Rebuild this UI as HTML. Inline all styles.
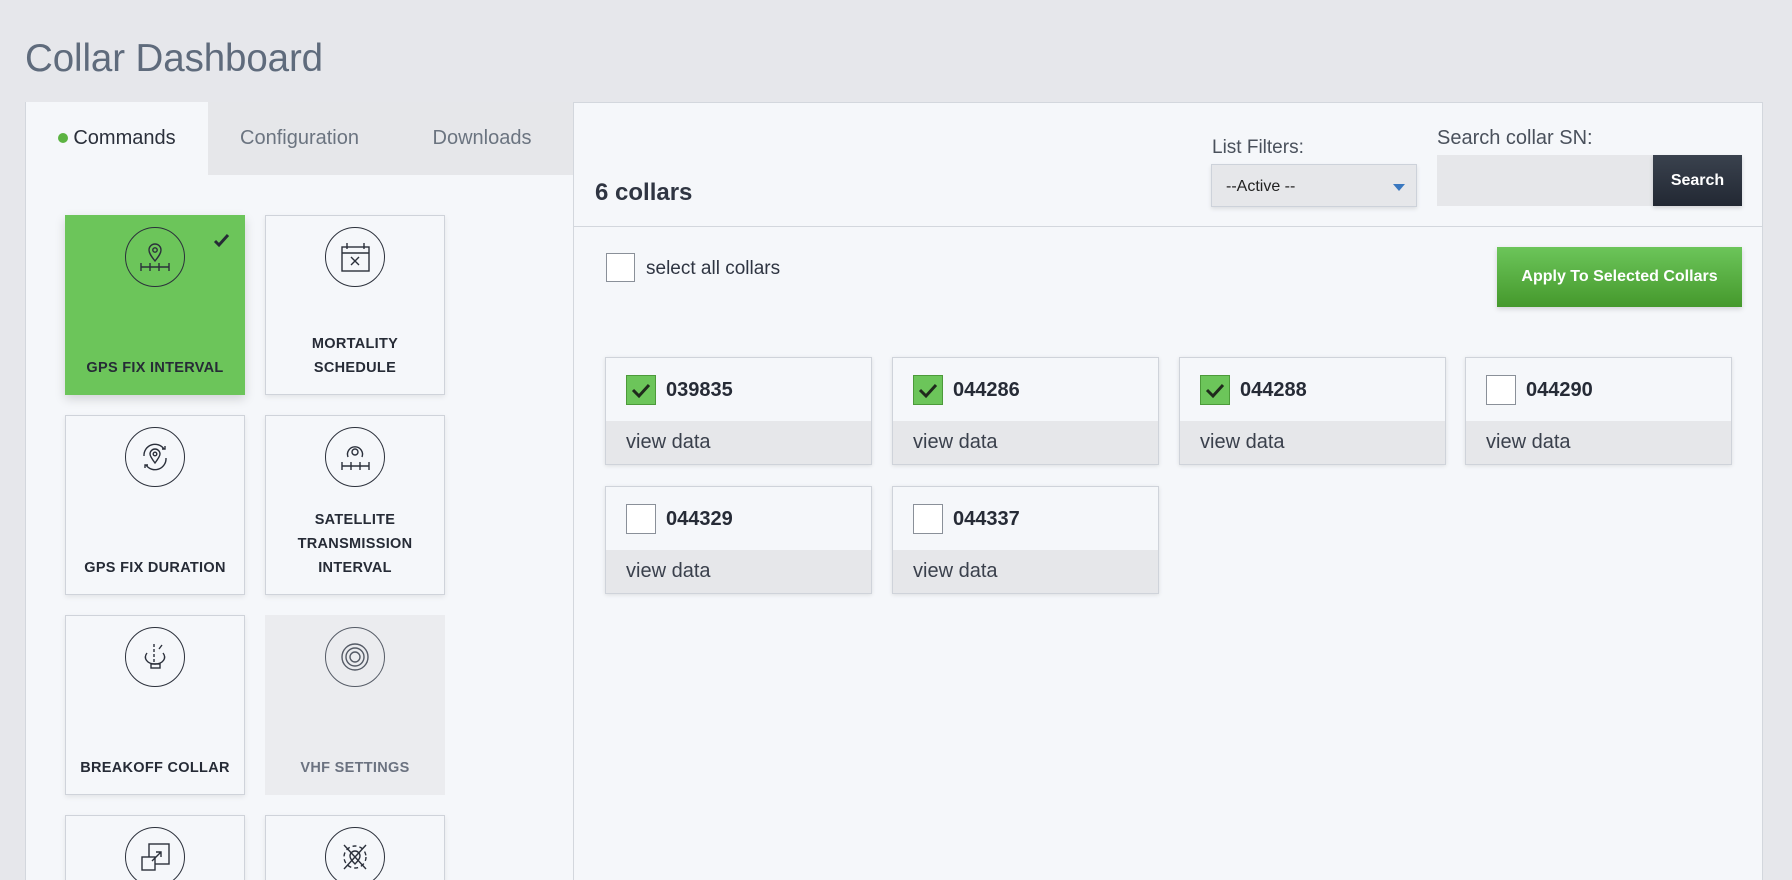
<!DOCTYPE html>
<html><head><meta charset="utf-8">
<style>
*{box-sizing:border-box;margin:0;padding:0}
html,body{width:1792px;height:880px;overflow:hidden}
body{background:#e6e7eb;font-family:"Liberation Sans",sans-serif;color:#2b303b}
#w{position:relative;width:1792px;height:880px;overflow:hidden}
.abs{position:absolute}
h1{position:absolute;left:25px;top:37px;font-size:38.5px;font-weight:normal;color:#5f6b7c;letter-spacing:-0.1px}
.panel{position:absolute;left:25px;top:102px;width:1738px;height:778px;background:#f5f7fa;border:1px solid #d3d7dd;border-bottom:none}
.tab{position:absolute;top:102px;height:73px;line-height:73px;font-size:20px;color:#6b7480;text-align:center;background:#e6e7ea}
.tile{position:absolute;width:180px;height:180px;background:#f5f7fa;border:1px solid #cfd3da;box-shadow:0 2px 5px rgba(0,0,0,.08)}
.tile .ic{position:absolute;left:59px;top:11px;width:60px;height:60px;border:1.3px solid #2b303b;border-radius:50%}
.tile .ic svg{position:absolute;left:0;top:0}
.tile .lb{position:absolute;left:0;right:0;bottom:14px;text-align:center;font-weight:bold;font-size:14.5px;line-height:24px;letter-spacing:.3px;color:#262b36}
.card{position:absolute;width:267px;height:108px;background:#f5f7fa;border:1px solid #cfd3da;box-shadow:0 1px 4px rgba(0,0,0,.1)}
.card .vd{position:absolute;left:0;right:0;bottom:0;height:43px;background:#e6e7ea;font-size:20px;color:#3a404c;padding-left:20px;line-height:42px}
.card .cb{position:absolute;left:20px;top:17px;width:30px;height:30px;border:1px solid #8a9099;background:#fff}
.card .cb.on{background:#6cc55a;border-color:#4c9a3a}
.card .sn{position:absolute;left:60px;top:21px;font-size:20px;font-weight:bold;color:#262b36}
</style></head><body><div id="w">
<h1>Collar Dashboard</h1>
<div class="panel"></div>
<div class="abs" style="left:573px;top:102px;width:1px;height:778px;background:#d3d7dd"></div>
<div class="tab" style="left:26px;width:182px;background:#f5f7fa;color:#2b303b"><span style="display:inline-block;width:10px;height:10px;border-radius:50%;background:#5cb342;margin-right:5px;vertical-align:1px"></span>Commands</div>
<div class="tab" style="left:208px;width:183px">Configuration</div>
<div class="tab" style="left:391px;width:182px">Downloads</div>

<div class="tile" style="left:65px;top:215px;background:#6cc55a;border-color:#6cc55a;box-shadow:0 4px 10px rgba(0,0,0,.15)">
 <svg class="abs" style="left:146px;top:16px" width="20" height="18" viewBox="0 0 20 18"><path d="M3 9l4 4 9-10" stroke="#262b36" stroke-width="3" fill="none"/></svg>
 <div class="ic"><svg width="58" height="58" viewBox="0 0 58 58" fill="none" stroke="#2b303b" stroke-width="1.4"><path d="M29 33c-4-5-6-8-6-11a6 6 0 0 1 12 0c0 3-2 6-6 11z"/><circle cx="29" cy="22" r="2.2"/><path d="M15 39h28M15 35v8M24 35v8M33 35v8M43 35v8"/></svg></div>
 <div class="lb">GPS FIX INTERVAL</div></div>
<div class="tile" style="left:265px;top:215px">
 <div class="ic"><svg width="58" height="58" viewBox="0 0 58 58" fill="none" stroke="#2b303b" stroke-width="1.4"><rect x="16" y="19" width="27" height="24"/><path d="M16 25h27M21 15v6M38 15v6M25 29l8 8M33 29l-8 8"/></svg></div>
 <div class="lb">MORTALITY<br>SCHEDULE</div></div>
<div class="tile" style="left:65px;top:415px">
 <div class="ic"><svg width="58" height="58" viewBox="0 0 58 58" fill="none" stroke="#2b303b" stroke-width="1.4"><path d="M29 35c-3-4-5-7-5-9a5 5 0 0 1 10 0c0 2-2 5-5 9z"/><circle cx="29" cy="26" r="1.8"/><path d="M18 28a11 11 0 0 1 20-7M40 30a11 11 0 0 1-20 7M36 21h3v-3M22 37h-3v3"/></svg></div>
 <div class="lb">GPS FIX DURATION</div></div>
<div class="tile" style="left:265px;top:415px">
 <div class="ic"><svg width="58" height="58" viewBox="0 0 58 58" fill="none" stroke="#2b303b" stroke-width="1.4"><circle cx="29" cy="24" r="3"/><path d="M22 29a7.5 7.5 0 1 1 14 0"/><path d="M16 38h27M16 34v8M25 34v8M34 34v8M43 34v8"/></svg></div>
 <div class="lb">SATELLITE<br>TRANSMISSION<br>INTERVAL</div></div>
<div class="tile" style="left:65px;top:615px">
 <div class="ic"><svg width="58" height="58" viewBox="0 0 58 58" fill="none" stroke="#2b303b" stroke-width="1.4"><path d="M28 16v20" stroke-dasharray="3 2"/><path d="M21 25c-4 5 0 11 8 11s12-6 8-11M33 21l3-4"/><rect x="25" y="36" width="9" height="4"/></svg></div>
 <div class="lb">BREAKOFF COLLAR</div></div>
<div class="tile" style="left:265px;top:615px;background:#ebecef;border-color:#ebecef;box-shadow:none">
 <div class="ic" style="border-color:#555b66"><svg width="58" height="58" viewBox="0 0 58 58" fill="none" stroke="#555b66" stroke-width="1.4"><circle cx="29" cy="29" r="13"/><circle cx="29" cy="29" r="9"/><circle cx="29" cy="29" r="5"/></svg></div>
 <div class="lb" style="color:#6b7280">VHF SETTINGS</div></div>
<div class="tile" style="left:65px;top:815px">
 <div class="ic"><svg width="58" height="58" viewBox="0 0 58 58" fill="none" stroke="#2b303b" stroke-width="1.4"><rect x="23" y="16" width="20" height="20"/><rect x="16" y="29" width="13" height="13" fill="#f5f7fa"/><path d="M26 33l9-9M30 24h5v5"/></svg></div></div>
<div class="tile" style="left:265px;top:815px">
 <div class="ic"><svg width="58" height="58" viewBox="0 0 58 58" fill="none" stroke="#2b303b" stroke-width="1.4"><circle cx="29" cy="29" r="11" stroke-dasharray="4 3"/><path d="M29 36c-3-3-5-6-5-8a5 5 0 0 1 10 0c0 2-2 5-5 8z"/><path d="M18 17l22 24M40 17l-22 24"/></svg></div></div>

<div class="abs" style="left:595px;top:179px;font-size:24px;font-weight:bold;color:#2f3542">6 collars</div>
<div class="abs" style="left:1212px;top:137px;font-size:19px;color:#4a515c">List Filters:</div>
<div class="abs" style="left:1211px;top:164px;width:206px;height:43px;background:#e6e7ea;border:1px solid #cdd2da;box-shadow:0 2px 4px rgba(0,0,0,.1);font-size:16px;color:#222;padding:13px 0 0 14px">--Active --
 <div class="abs" style="left:181px;top:19px;width:0;height:0;border-left:6px solid transparent;border-right:6px solid transparent;border-top:7px solid #3a78c0"></div></div>
<div class="abs" style="left:1437px;top:127px;font-size:20px;color:#4a515c">Search collar SN:</div>
<div class="abs" style="left:1437px;top:155px;width:216px;height:51px;background:#e6e7ea"></div>
<div class="abs" style="left:1653px;top:155px;width:89px;height:51px;background:linear-gradient(#3a424e,#222833);color:#fff;font-weight:bold;font-size:16px;text-align:center;line-height:51px;box-shadow:0 2px 4px rgba(0,0,0,.15)">Search</div>
<div class="abs" style="left:574px;top:226px;width:1188px;height:1px;background:#d3d7dd"></div>

<div class="abs" style="left:606px;top:253px;width:29px;height:29px;border:1px solid #8a9099;background:#fff"></div>
<div class="abs" style="left:646px;top:258px;font-size:19px;color:#2f3542">select all collars</div>
<div class="abs" style="left:1497px;top:247px;width:245px;height:60px;background:linear-gradient(#6cc55a,#45992c);color:#fff;font-weight:bold;font-size:16px;text-align:center;line-height:60px;box-shadow:0 2px 5px rgba(0,0,0,.15)">Apply To Selected Collars</div>

<div class="card" style="left:605px;top:357px"><div class="cb on"><svg width="28" height="28" viewBox="0 0 28 28"><path d="M6 14l6 6 10-11" stroke="#1f2a1c" stroke-width="3" fill="none"/></svg></div><div class="sn">039835</div><div class="vd">view data</div></div>
<div class="card" style="left:892px;top:357px"><div class="cb on"><svg width="28" height="28" viewBox="0 0 28 28"><path d="M6 14l6 6 10-11" stroke="#1f2a1c" stroke-width="3" fill="none"/></svg></div><div class="sn">044286</div><div class="vd">view data</div></div>
<div class="card" style="left:1179px;top:357px"><div class="cb on"><svg width="28" height="28" viewBox="0 0 28 28"><path d="M6 14l6 6 10-11" stroke="#1f2a1c" stroke-width="3" fill="none"/></svg></div><div class="sn">044288</div><div class="vd">view data</div></div>
<div class="card" style="left:1465px;top:357px"><div class="cb"></div><div class="sn">044290</div><div class="vd">view data</div></div>
<div class="card" style="left:605px;top:486px"><div class="cb"></div><div class="sn">044329</div><div class="vd">view data</div></div>
<div class="card" style="left:892px;top:486px"><div class="cb"></div><div class="sn">044337</div><div class="vd">view data</div></div>
</div></body></html>
